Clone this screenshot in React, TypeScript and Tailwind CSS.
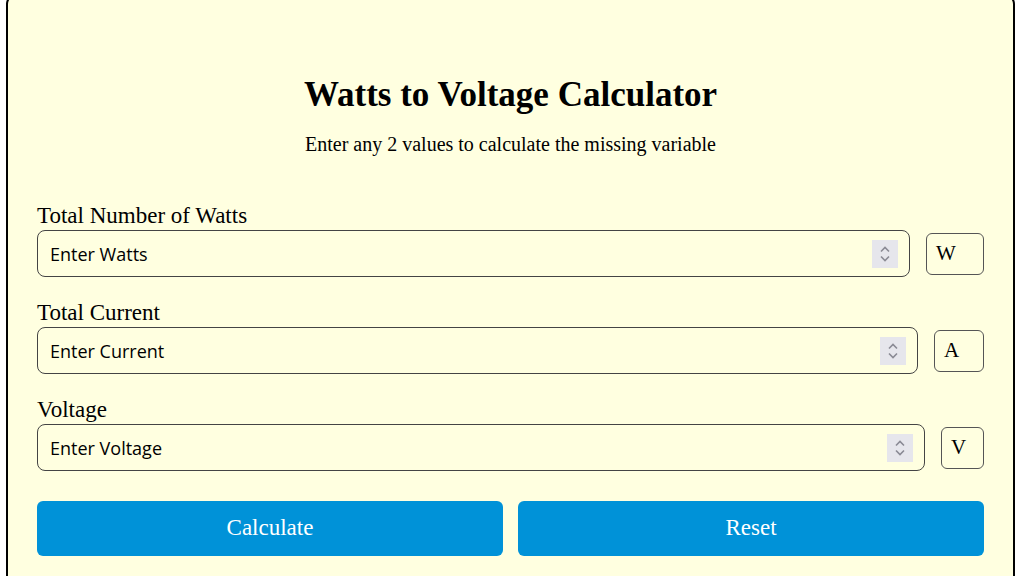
import { useState } from 'react'

// ── Types ──────────────────────────────────────────────────────────────────
interface Field {
  label: string
  placeholder: string
  unit: string
  unitWidth: string
}

const fields: Field[] = [
  { label: 'Total Number of Watts', placeholder: 'Enter Watts', unit: 'W', unitWidth: 'w-[58px]' },
  { label: 'Total Current', placeholder: 'Enter Current', unit: 'A', unitWidth: 'w-[50px]' },
  { label: 'Voltage', placeholder: 'Enter Voltage', unit: 'V', unitWidth: 'w-[43px]' },
]

// ── Spinner ────────────────────────────────────────────────────────────────
function Spinner() {
  return (
    <div className="flex h-[28px] w-[26px] shrink-0 flex-col items-center justify-center bg-[#e6e6ec]">
      <svg width="12" height="20" viewBox="0 0 12 20" fill="none" stroke="#8a8a94" strokeWidth="1.6">
        <path d="M2 7.5 L6 3.5 L10 7.5" />
        <path d="M2 12.5 L6 16.5 L10 12.5" />
      </svg>
    </div>
  )
}

// ── FieldRow ───────────────────────────────────────────────────────────────
function FieldRow({
  field,
  value,
  onChange,
}: {
  field: Field
  value: string
  onChange: (v: string) => void
}) {
  return (
    <div className="flex flex-col gap-[1px]">
      <label className="text-[23px] leading-[26px] text-black">{field.label}</label>
      <div className="flex items-center gap-[16px]">
        <div className="flex h-[47px] flex-1 items-center rounded-[8px] border border-[#444] pl-[12px] pr-[11px]">
          <input
            type="text"
            value={value}
            onChange={(e) => onChange(e.target.value)}
            placeholder={field.placeholder}
            className="min-w-0 flex-1 bg-transparent pt-[1px] font-['Open_Sans',sans-serif] text-[18px] font-medium text-black outline-none placeholder:text-black"
          />
          <Spinner />
        </div>
        <div
          className={`flex h-[42px] ${field.unitWidth} items-center rounded-[6px] border border-[#555] pl-[9px] text-[21px] text-black`}
        >
          {field.unit}
        </div>
      </div>
    </div>
  )
}

// ── App ────────────────────────────────────────────────────────────────────
export default function App() {
  const [values, setValues] = useState<string[]>(['', '', ''])

  return (
    <main className="h-[576px] overflow-hidden bg-white font-['Liberation_Serif',serif]">
      <div className="ml-[6px] mr-[9px] mt-[-6px] rounded-[10px] border-2 border-black bg-[#ffffe0] px-[29px] pt-[79px] pb-[40px]">
        {/* Header */}
        <h1 className="text-center text-[35px] font-bold leading-[40px] text-black">
          Watts to Voltage Calculator
        </h1>
        <p className="mt-[17px] text-center text-[20px] leading-[24px] text-black">
          Enter any 2 values to calculate the missing variable
        </p>

        {/* Fields */}
        <div className="mt-[47px] flex flex-col gap-[23px]">
          {fields.map((f, i) => (
            <FieldRow
              key={f.label}
              field={f}
              value={values[i]}
              onChange={(v) => setValues(values.map((x, j) => (j === i ? v : x)))}
            />
          ))}
        </div>

        {/* Buttons */}
        <div className="mt-[30px] flex gap-[15px]">
          <button className="h-[55px] flex-1 rounded-[6px] bg-[#0092d8] text-[23px] text-white">
            Calculate
          </button>
          <button
            className="h-[55px] flex-1 rounded-[6px] bg-[#0092d8] text-[23px] text-white"
            onClick={() => setValues(['', '', ''])}
          >
            Reset
          </button>
        </div>
      </div>
    </main>
  )
}
